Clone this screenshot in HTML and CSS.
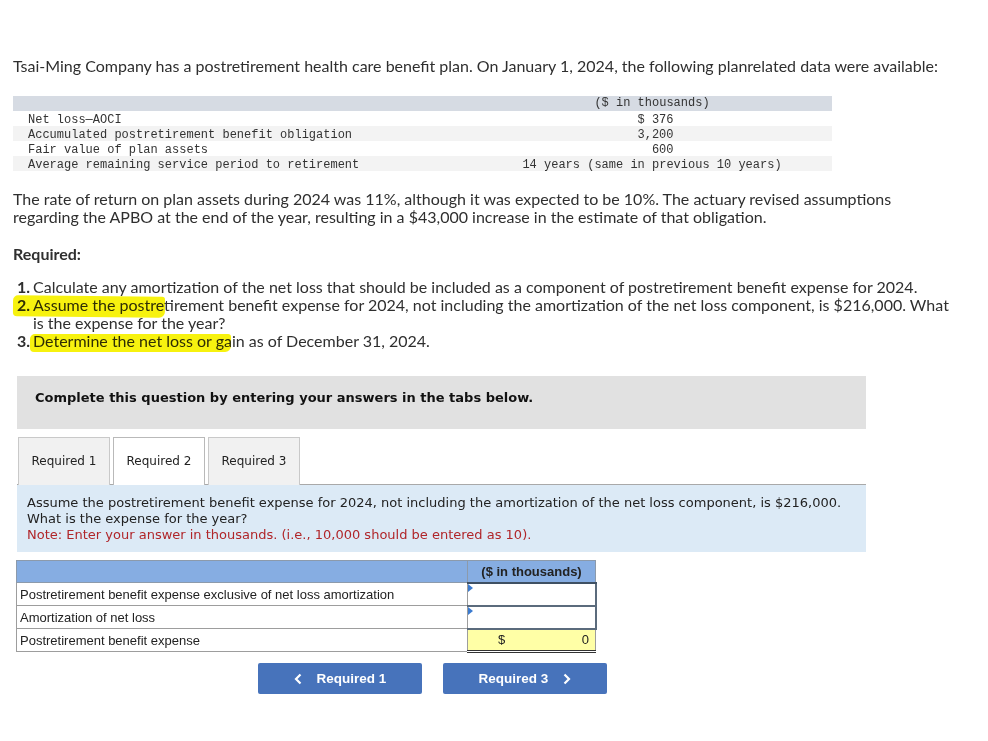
FILE: index.html
```html
<!DOCTYPE html>
<html lang="en">
<head>
<meta charset="utf-8">
<title>Postretirement benefit plan</title>
<link rel="stylesheet" href="styles.css">
</head>
<body>
<div class="page">
  <p class="intro">Tsai-Ming Company has a postretirement health care benefit plan. On January 1, 2024, the following planrelated data were available:</p>

  <div class="data">
    <div class="data-row head"><span class="lbl"></span><span class="val">($ in thousands)</span></div>
    <div class="data-row"><span class="lbl">Net loss—AOCI</span><span class="val"><span class="num">$ 376</span></span></div>
    <div class="data-row alt"><span class="lbl">Accumulated postretirement benefit obligation</span><span class="val"><span class="num">3,200</span></span></div>
    <div class="data-row"><span class="lbl">Fair value of plan assets</span><span class="val"><span class="num">600</span></span></div>
    <div class="data-row alt"><span class="lbl">Average remaining service period to retirement</span><span class="val">14 years (same in previous 10 years)</span></div>
  </div>

  <p class="para">The rate of return on plan assets during 2024 was 11%, although it was expected to be 10%. The actuary revised assumptions regarding the APBO at the end of the year, resulting in a $43,000 increase in the estimate of that obligation.</p>

  <p class="req-title">Required:</p>
  <ol class="reqs">
    <li><span class="no">1.</span><span class="txt">Calculate any amortization of the net loss that should be included as a component of postretirement benefit expense for 2024.</span></li>
    <li><span class="mark mark-a"></span><span class="no">2.</span><span class="txt">Assume the postretirement benefit expense for 2024, not including the amortization of the net loss component, is $216,000. What is the expense for the year?</span></li>
    <li><span class="mark mark-b"></span><span class="no">3.</span><span class="txt">Determine the net loss or gain as of December 31, 2024.</span></li>
  </ol>

  <div class="prompt">Complete this question by entering your answers in the tabs below.</div>

  <div class="tabs">
    <div class="tab">Required 1</div>
    <div class="tab active">Required 2</div>
    <div class="tab">Required 3</div>
  </div>

  <div class="panel">
    <p>Assume the postretirement benefit expense for 2024, not including the amortization of the net loss component, is $216,000. What is the expense for the year?</p>
    <p class="note">Note: Enter your answer in thousands. (i.e., 10,000 should be entered as 10).</p>
  </div>

  <table class="answer">
    <tr class="hdr"><th class="c-lbl"></th><th class="c-in">($ in thousands)</th></tr>
    <tr><td class="c-lbl">Postretirement benefit expense exclusive of net loss amortization</td><td class="c-in entry"><span class="flag"></span></td></tr>
    <tr><td class="c-lbl">Amortization of net loss</td><td class="c-in entry"><span class="flag"></span></td></tr>
    <tr><td class="c-lbl">Postretirement benefit expense</td><td class="c-in total"><span class="cur">$</span><span class="amt">0</span></td></tr>
  </table>

  <div class="nav">
    <button class="btn"><svg class="chev" viewBox="0 0 8 12" width="8" height="12"><path d="M6.5 1.5 2 6l4.5 4.5" fill="none" stroke="#fff" stroke-width="2.2"/></svg><span>Required 1</span></button>
    <button class="btn"><span>Required 3</span><svg class="chev" viewBox="0 0 8 12" width="8" height="12"><path d="M1.5 1.5 6 6l-4.5 4.5" fill="none" stroke="#fff" stroke-width="2.2"/></svg></button>
  </div>
</div>
</body>
</html>
```

FILE: styles.css
```css
* { box-sizing: border-box; }

body {
  margin: 0;
  background: #fff;
  color: #2f2f2f;
  font-family: "Lato", "Open Sans", sans-serif;
  font-size: 16px;
}

.page {
  padding: 57px 0 40px 13px;
  width: 988px;
}

p { margin: 0; }

.intro { line-height: 18px; }

/* given data block */
.data {
  margin-top: 21px;
  width: 819px;
  font-family: "Liberation Mono", monospace;
  font-size: 12px;
  color: #333;
}
.data-row {
  display: grid;
  grid-template-columns: 1fr 360px;
  height: 15px;
  padding-top: 3px;
  line-height: 12px;
}
.data-row.head { background: #d6dbe3; padding-top: 1px; }
.data-row.alt { background: #f3f3f3; }
.data-row .lbl { padding-left: 15px; white-space: pre; }
.data-row .val { text-align: center; white-space: pre; }
.num { display: inline-block; width: 43px; text-align: right; }

.para {
  margin-top: 19px;
  line-height: 17.5px;
  padding-right: 90px;
}

.req-title {
  margin-top: 20px;
  font-weight: 700;
  line-height: 18px;
}

.reqs {
  list-style: none;
  margin: 15px 0 0;
  padding: 0;
  line-height: 18px;
}
.reqs li {
  position: relative;
  display: flex;
  padding-right: 32px;
}
.reqs .no {
  flex: 0 0 17px;
  text-align: right;
  font-weight: 700;
  position: relative;
}
.reqs .txt { padding-left: 3px; position: relative; }

/* yellow highlighter strokes laid over the text */
.mark {
  position: absolute;
  background: #f7f20f;
  mix-blend-mode: multiply;
  border-radius: 5px 3px 6px 4px;
  z-index: 1;
}
.mark-a { left: 0; top: 0; width: 152px; height: 21px; transform: rotate(0.6deg); }
.mark-b { left: 17px; top: 2px; width: 201px; height: 18px; }

.prompt {
  margin-top: 26px;
  margin-left: 4px;
  width: 849px;
  height: 53px;
  background: #e1e1e1;
  padding: 14px 18px 0;
  font-family: "DejaVu Sans", Verdana, sans-serif;
  font-size: 13px;
  font-weight: 700;
  line-height: 16px;
  color: #111;
}

.tabs {
  margin-top: 8px;
  margin-left: 4px;
  width: 849px;
  display: flex;
  gap: 3px;
  padding-left: 1px;
  border-bottom: 1px solid #a9a9a9;
  font-family: "DejaVu Sans", Verdana, sans-serif;
  font-size: 12px;
}
.tab {
  width: 92px;
  height: 48px;
  margin-bottom: -1px;
  border: 1px solid #c9c9c9;
  border-bottom: none;
  background: #f1f1f1;
  color: #222;
  display: flex;
  align-items: center;
  justify-content: center;
  padding-bottom: 2px;
}
.tab.active { background: #fff; border-color: #b9b9b9; }

.panel {
  margin-left: 4px;
  width: 849px;
  background: #dceaf6;
  padding: 10px 10px 9px;
  font-family: "DejaVu Sans", Verdana, sans-serif;
  font-size: 13px;
  line-height: 16px;
  color: #222;
}
.panel .note { color: #b0262a; }

/* answer grid */
.answer {
  margin-top: 8px;
  margin-left: 3px;
  border-collapse: collapse;
  font-family: "Liberation Sans", Arial, sans-serif;
  font-size: 13px;
  color: #222;
}
.answer th, .answer td { padding: 0; height: 23px; }
.answer .hdr th {
  height: 22px;
  background: #86ade2;
  border: 1px solid #8c9aab;
  font-weight: 700;
}
.answer .c-lbl {
  width: 451px;
  text-align: left;
  padding-left: 3px;
  border: 1px solid #9d9d9d;
}
.answer .c-in {
  width: 128px;
  position: relative;
}
.answer .hdr .c-in { border-bottom: 2px solid #3f5063; }
.answer .entry {
  background: #fff;
  border: 2px solid #5b6b7c;
  border-left: 1px solid #8d99a6;
}
.flag {
  position: absolute;
  left: 0;
  top: 0;
  width: 0;
  height: 0;
  border-top: 4px solid transparent;
  border-bottom: 4px solid transparent;
  border-left: 5px solid #3b7bd0;
}
.answer .total {
  background: #ffffa6;
  border: 1px solid #9d9d9d;
  border-bottom: 3px double #333;
  padding: 0 6px 0 30px;
}
.total .cur { float: left; }
.total .amt { float: right; }

.nav {
  margin-top: 10px;
  padding-left: 245px;
  display: flex;
  gap: 21px;
}
.btn {
  width: 164px;
  height: 31px;
  border: none;
  border-radius: 2px;
  background: #4773bb;
  color: #fff;
  font-family: "Liberation Sans", Arial, sans-serif;
  font-size: 13.5px;
  font-weight: 700;
  display: flex;
  align-items: center;
  justify-content: center;
  gap: 15px;
  padding: 0;
}
.btn .chev { margin-top: 1px; }
```
